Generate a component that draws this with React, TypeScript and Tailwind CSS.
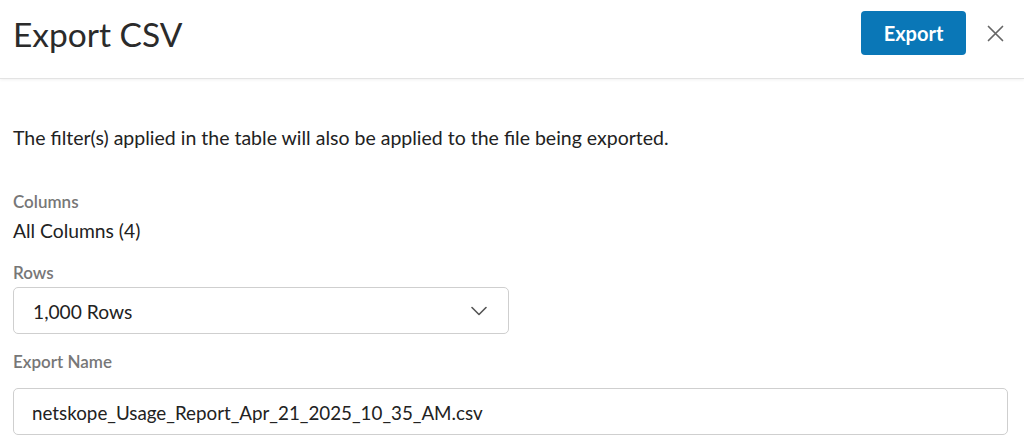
import React from "react";

export default function App() {
  return (
    <div
      className="w-[1024px] h-[445px] bg-white overflow-hidden text-[#222]"
      style={{ fontFamily: "Lato, 'Open Sans', sans-serif" }}
    >
      <div className="h-[79px] flex justify-between items-start px-[13px] border-b border-[#e3e3e3] shadow-[0_1px_3px_rgba(0,0,0,0.06)]">
        <h1 className="mt-[14px] text-[33.5px] leading-[40px] text-[#2b2b2b] font-normal">Export CSV</h1>
        <div className="flex items-center mt-[11px] mr-[7px]">
          <button className="w-[105px] h-[44px] rounded-[4px] bg-[#0a77b7] text-white text-[20px] font-bold leading-none">
            Export
          </button>
          <svg className="ml-[21px]" width="17" height="17" viewBox="0 0 17 17" fill="none">
            <path d="M1.5 1.5L15.5 15.5M15.5 1.5L1.5 15.5" stroke="#666" strokeWidth="1.7" strokeLinecap="round" />
          </svg>
        </div>
      </div>

      <div className="px-[13px]">
        <p className="mt-[47px] text-[19.5px] leading-[24px]">
          The filter(s) applied in the table will also be applied to the file being exported.
        </p>

        <div className="mt-[42px] text-[17px] leading-[20px] text-[#777] font-semibold">Columns</div>
        <div className="mt-[7px] text-[19.3px] leading-[24px]">All Columns (4)</div>

        <div className="mt-[20px] text-[17px] leading-[20px] text-[#777] font-semibold">Rows</div>
        <div className="mt-[4px] w-[496px] h-[47px] border border-[#cfcfcf] rounded-[5px] flex items-center justify-between pl-[19px] pr-[21px]">
          <span className="text-[19.2px] leading-[24px] pt-[2px]">1,000 Rows</span>
          <svg width="16" height="10" viewBox="0 0 16 10" fill="none">
            <path d="M1 1.5L8 8.5L15 1.5" stroke="#555" strokeWidth="1.6" strokeLinecap="round" strokeLinejoin="round" />
          </svg>
        </div>

        <div className="mt-[18px] text-[17px] leading-[20px] text-[#777] font-semibold">Export Name</div>
        <div className="mt-[16px] w-[995px] h-[47px] border border-[#cfcfcf] rounded-[5px] flex items-center pl-[18px]">
          <span className="text-[18.8px] leading-[24px] pt-[2px]">netskope_Usage_Report_Apr_21_2025_10_35_AM.csv</span>
        </div>
      </div>
    </div>
  );
}
